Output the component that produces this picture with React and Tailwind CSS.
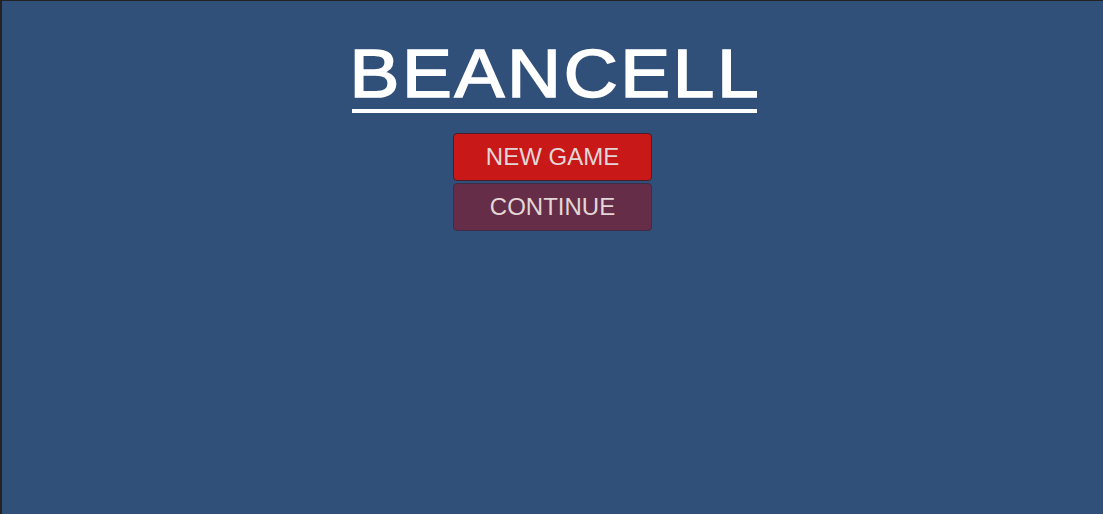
export default function App() {
  return (
    <div className="w-[1103px] h-[514px] bg-[#30507a] border-t border-l-2 border-[#222222] flex flex-col items-center font-['Liberation_Sans',Arial,sans-serif]">
      <div className="mt-[36px] flex flex-col items-center">
        <h1 className="text-[68px] leading-[72px] text-white tracking-[2.4px] font-normal scale-x-[1.1] pl-[2px] ml-[4px] [-webkit-text-stroke:1.6px_white]">BEANCELL</h1>
        <div className="w-[405px] h-[4px] bg-white mt-[0px] ml-[3px]" />
      </div>
      <div className="mt-[20px] flex flex-col gap-[2px]">
        <button className="w-[199px] h-[48px] rounded-[4px] border border-[#4b1c2a] bg-[#c91818] text-[24px] text-[#e3d6d6] flex items-center justify-center">
          NEW GAME
        </button>
        <button className="w-[199px] h-[48px] rounded-[4px] border border-[#3e2c48] bg-[#652d47] text-[24px] text-[#e3d6d6] flex items-center justify-center">
          CONTINUE
        </button>
      </div>
    </div>
  );
}
